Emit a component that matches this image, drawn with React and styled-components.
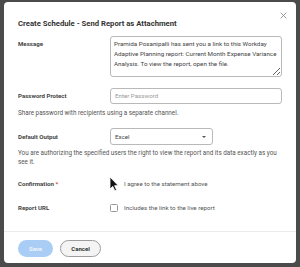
import React from "react";
import styled, { createGlobalStyle } from "styled-components";

const GlobalStyle = createGlobalStyle`
  html, body {
    margin: 0;
    padding: 0;
    width: 300px;
    height: 267px;
    overflow: hidden;
    font-family: Roboto, "Liberation Sans", sans-serif;
  }
`;

const Overlay = styled.div`
  width: 300px;
  height: 267px;
  box-sizing: border-box;
  background: #4b4b4b;
  padding: 2px 4px 4px 4px;
`;

const Modal = styled.div`
  position: relative;
  height: 100%;
  background: #fff;
  border-radius: 4px;
  display: flex;
  flex-direction: column;
`;

const Close = styled.button`
  position: absolute;
  top: 8px;
  right: 8px;
  width: 10px;
  height: 10px;
  padding: 0;
  border: none;
  background: none;
  display: flex;
  align-items: center;
  justify-content: center;
`;

const Title = styled.h1`
  margin: 0;
  padding: 17px 14px 0;
  font-size: 7.7px;
  line-height: 10px;
  font-weight: 700;
  color: #333;
`;

const Body = styled.div`
  flex: 1;
  padding: 0 14px;
`;

const Row = styled.div`
  display: grid;
  grid-template-columns: 92px 1fr;
  align-items: ${(p) => (p.$top ? "start" : "center")};
  margin-top: ${(p) => p.$mt}px;
`;

const Label = styled.div`
  font-size: 6.1px;
  font-weight: 700;
  color: #444;
  line-height: 8px;
  padding-top: ${(p) => (p.$top ? 4 : 0)}px;
`;

const Required = styled.span`
  color: #d0312d;
`;

const TextArea = styled.textarea`
  display: block;
  box-sizing: border-box;
  width: 172px;
  height: 41px;
  margin: 0;
  padding: 2px 3px;
  border: 1px solid #b9b9b9;
  border-radius: 3px;
  font-family: Roboto, "Liberation Sans", sans-serif;
  font-size: 6.25px;
  line-height: 10px;
  color: #444;
  resize: vertical;
  overflow: hidden;
`;

const Input = styled.input`
  display: block;
  box-sizing: border-box;
  width: 172px;
  height: 16px;
  margin: 0;
  padding: 0 4px;
  border: 1px solid #b9b9b9;
  border-radius: 3px;
  font-family: Roboto, "Liberation Sans", sans-serif;
  font-size: 6.2px;
  &::placeholder {
    color: #9a9a9a;
  }
`;

const Select = styled.div`
  box-sizing: border-box;
  width: 103px;
  height: 17px;
  border: 1px solid #b9b9b9;
  border-radius: 3px;
  padding: 0 6px 0 4px;
  display: flex;
  align-items: center;
  justify-content: space-between;
  font-size: 6.2px;
  color: #444;
`;

const Caret = styled.span`
  width: 0;
  height: 0;
  border-left: 2.2px solid transparent;
  border-right: 2.2px solid transparent;
  border-top: 2.8px solid #555;
`;

const Help = styled.p`
  margin: ${(p) => p.$mt}px 0 0;
  font-size: 6.3px;
  line-height: 9px;
  color: #555;
  max-width: 262px;
`;

const Choice = styled.label`
  display: flex;
  align-items: center;
  gap: 6px;
  font-size: 6.2px;
  color: #555;
  line-height: 8px;
  padding-left: ${(p) => p.$indent || 0}px;
`;

const Box = styled.span`
  box-sizing: border-box;
  width: 8px;
  height: 8px;
  border: 1px solid #999;
  border-radius: 1.5px;
  background: #fff;
`;

const Footer = styled.div`
  border-top: 1px solid #ececec;
  padding: 8px 14px 6px;
  display: flex;
  gap: 7px;
`;

const Button = styled.button`
  box-sizing: border-box;
  height: 17px;
  width: ${(p) => p.$w}px;
  border-radius: 9px;
  font-family: Roboto, "Liberation Sans", sans-serif;
  font-size: 6px;
  font-weight: 700;
  padding: 0;
  border: ${(p) => (p.$primary ? "none" : "1px solid #9c9c9c")};
  background: ${(p) => (p.$primary ? "#a9cdf4" : "#f4f4f4")};
  color: ${(p) => (p.$primary ? "#eef5fd" : "#333")};
`;

const Pointer = styled.svg`
  position: absolute;
  left: 105px;
  top: 174px;
`;

export default function App() {
  return (
    <>
      <GlobalStyle />
      <Overlay>
        <Modal>
          <Close aria-label="Close">
            <svg width="7" height="7" viewBox="0 0 10 10">
              <path d="M1 1L9 9M9 1L1 9" stroke="#8a8a8a" strokeWidth="1.2" />
            </svg>
          </Close>
          <Title>Create Schedule - Send Report as Attachment</Title>
          <Body>
            <Row $top $mt={7}>
              <Label $top>Message</Label>
              <TextArea
                readOnly
                value="Pramida Posanipalli has sent you a link to this Workday Adaptive Planning report: Current Month Expense Variance Analysis. To view the report, open the file."
              />
            </Row>
            <Row $mt={11}>
              <Label>Password Protect</Label>
              <Input placeholder="Enter Password" />
            </Row>
            <Help $mt={5}>Share password with recipients using a separate channel.</Help>
            <Row $mt={10}>
              <Label>Default Output</Label>
              <Select>
                Excel
                <Caret />
              </Select>
            </Row>
            <Help $mt={4}>
              You are authorizing the specified users the right to view the report and its data exactly as you see it.
            </Help>
            <Row $mt={13}>
              <Label>
                Confirmation <Required>*</Required>
              </Label>
              <Choice $indent={14}>I agree to the statement above</Choice>
            </Row>
            <Row $mt={16}>
              <Label>Report URL</Label>
              <Choice>
                <Box />
                Includes the link to the live report
              </Choice>
            </Row>
          </Body>
          <Footer>
            <Button $primary $w={35}>Save</Button>
            <Button $w={41}>Cancel</Button>
          </Footer>
          <Pointer width="10" height="16" viewBox="0 0 10 16">
            <path
              d="M1 1L1 13L3.8 10.4L5.8 14.8L7.6 14L5.6 9.7L9.2 9.6Z"
              fill="#111"
              stroke="#fff"
              strokeWidth="0.8"
              strokeLinejoin="round"
            />
          </Pointer>
        </Modal>
      </Overlay>
    </>
  );
}
